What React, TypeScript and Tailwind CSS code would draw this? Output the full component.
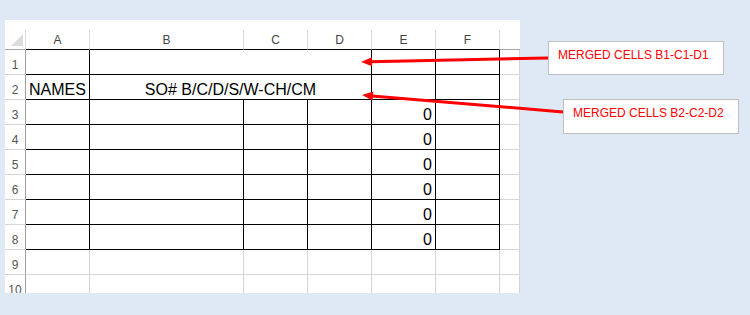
const letters = ["A", "B", "C", "D", "E", "F"];
const widths = ["w-[64px]", "w-[154px]", "w-[64px]", "w-[64px]", "w-[64px]", "w-[64px]"];

function RowHead({ n }: { n: number }) {
  return (
    <div className="flex w-[21px] shrink-0 items-end justify-center border-r border-b border-r-[#a0a0a0] border-b-[#d4d4d4] pb-[2px] text-[12px] leading-[14px] text-[#555]">
      {n}
    </div>
  );
}

function Cell({
  w,
  dark,
  align = "left",
  children,
}: {
  w: string;
  dark: boolean;
  align?: "left" | "center" | "right";
  children?: React.ReactNode;
}) {
  const justify = align === "center" ? "justify-center" : align === "right" ? "justify-end" : "justify-start";
  return (
    <div
      className={`flex shrink-0 items-end border-r border-b px-[3px] text-[16px] leading-[18px] text-black ${w} ${justify} ${
        dark ? "border-black" : "border-[#d4d4d4]"
      }`}
    >
      {children}
    </div>
  );
}

function Row({ n }: { n: number }) {
  const dark = n <= 8;
  const merged = n === 1 || n === 2;
  return (
    <div className="flex h-[25px]">
      <RowHead n={n} />
      <Cell w="w-[64px]" dark={dark}>
        {n === 2 ? "NAMES" : null}
      </Cell>
      {merged ? (
        <Cell w="w-[282px]" dark={dark} align="center">
          {n === 2 ? "SO# B/C/D/S/W-CH/CM" : null}
        </Cell>
      ) : (
        <>
          <Cell w="w-[154px]" dark={dark} />
          <Cell w="w-[64px]" dark={dark} />
          <Cell w="w-[64px]" dark={dark} />
        </>
      )}
      <Cell w="w-[64px]" dark={dark} align="right">
        {n >= 3 && n <= 8 ? "0" : null}
      </Cell>
      <Cell w="w-[64px]" dark={dark} />
      <Cell w="w-[20px]" dark={false} />
    </div>
  );
}

export default function App() {
  return (
    <div className="relative h-[315px] w-[750px] overflow-hidden bg-[#dee9f5] pl-[5px] pt-[20px] font-['Liberation_Sans',Arial,sans-serif]">
      <div className="h-[273px] w-[515px] overflow-hidden bg-white">
        <div className="h-[10px]" />
        {/* column headers */}
        <div className="flex h-[20px]">
          <div className="relative w-[21px] shrink-0 border-r border-b border-r-[#d9d9d9] border-b-[#a6a6a6]">
            <svg className="absolute left-[6px] top-[4px]" width="13" height="13" viewBox="0 0 13 13">
              <polygon points="12,0 12,12 0,12" fill="#dcdcdc" />
            </svg>
          </div>
          {letters.map((l, i) => (
            <div
              key={l}
              className={`flex shrink-0 items-center justify-center border-r border-b border-r-[#d9d9d9] border-b-black text-[12px] text-[#444] ${widths[i]}`}
            >
              {l}
            </div>
          ))}
          <div className="w-[20px] shrink-0 border-b border-[#a6a6a6]" />
        </div>
        {[1, 2, 3, 4, 5, 6, 7, 8, 9, 10].map((n) => (
          <Row key={n} n={n} />
        ))}
      </div>

      {/* annotation arrows */}
      <svg className="pointer-events-none absolute left-0 top-0" width="750" height="315">
        <line x1="548" y1="58" x2="371" y2="61.8" stroke="#ff0000" strokeWidth="3" />
        <polygon points="361,62 371.9,57.3 372.1,66.3" fill="#ff0000" />
        <line x1="563" y1="112" x2="372" y2="95.9" stroke="#ff0000" strokeWidth="3" />
        <polygon points="362,95 373.3,91.4 372.6,100.4" fill="#ff0000" />
      </svg>

      <div className="absolute left-[548px] top-[41px] h-[34px] w-[176px] border border-[#bfbfbf] bg-white pl-[9px] pt-[6px] text-[12px] leading-[14px] text-[#ff0000]">
        MERGED CELLS B1-C1-D1
      </div>
      <div className="absolute left-[563px] top-[99px] h-[35px] w-[176px] border border-[#bfbfbf] bg-white pl-[9px] pt-[6px] text-[12px] leading-[14px] text-[#ff0000]">
        MERGED CELLS B2-C2-D2
      </div>
    </div>
  );
}
